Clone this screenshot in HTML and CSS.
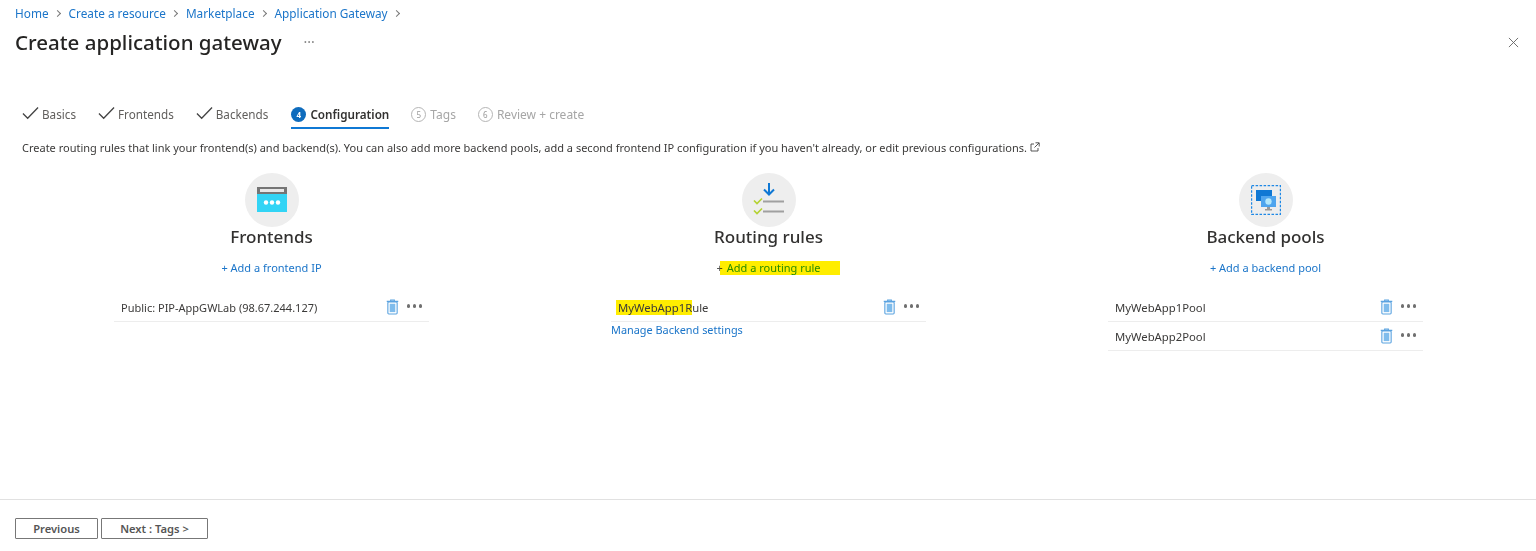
FILE: index.html
```html
<!DOCTYPE html>
<html lang="en">
<head>
<meta charset="utf-8">
<title>Create application gateway</title>
<link rel="stylesheet" href="styles.css">
</head>
<body>
<svg class="defs" width="0" height="0" aria-hidden="true">
  <symbol id="trash" viewBox="0 0 14 17">
    <path d="M5 2V1h4v1M.8 2.5h12.4" fill="none" stroke="#5ba3e0" stroke-width="1.2"/>
    <rect x="2" y="3" width="10" height="13" rx="1" fill="#fff" stroke="#5ba3e0" stroke-width="1.2"/>
    <rect x="4" y="5" width="6" height="9" fill="#7fbcec"/>
  </symbol>
  <symbol id="check" viewBox="0 0 18 14">
    <path d="M1 7.5 6 12.5 17 1.2" fill="none" stroke="#444" stroke-width="1.4"/>
  </symbol>
</svg>
<main class="page">
  <nav class="crumbs">
    <a>Home</a><span class="sep"></span>
    <a>Create a resource</a><span class="sep"></span>
    <a>Marketplace</a><span class="sep"></span>
    <a>Application Gateway</a><span class="sep"></span>
  </nav>
  <header class="head">
    <h1>Create application gateway</h1>
    <span class="head-more">···</span>
    <svg class="close" viewBox="0 0 12 12"><path d="M1 1l10 10M11 1 1 11" fill="none" stroke="#666" stroke-width="1"/></svg>
  </header>
  <div class="tabs">
    <div class="tab done"><svg class="tick"><use href="#check"/></svg>Basics</div>
    <div class="tab done t2"><svg class="tick"><use href="#check"/></svg>Frontends</div>
    <div class="tab done t3"><svg class="tick"><use href="#check"/></svg>Backends</div>
    <div class="tab active"><span class="num">4</span>Configuration</div>
    <div class="tab off"><span class="num">5</span>Tags</div>
    <div class="tab off"><span class="num">6</span>Review + create</div>
  </div>
  <p class="desc">Create routing rules that link your frontend(s) and backend(s). You can also add more backend pools, add a second frontend IP configuration if you haven't already, or edit previous configurations.<svg class="ext" viewBox="0 0 10 10"><path d="M4 2H1v7h7V6M5.500 .8h3.700v3.700M9 1 4.500 5.500" fill="none" stroke="#444" stroke-width=".9"/></svg></p>
  <section class="cols">
    <div class="col">
      <div class="badge"><svg class="fe-icon" viewBox="0 0 30 25" width="30" height="25">
        <rect width="30" height="25" fill="#32d4f5"/><rect width="30" height="7" fill="#757575"/><rect x="3" y="2" width="24" height="3" fill="#e8e8e8"/>
        <circle cx="9" cy="15.500" r="2.200" fill="#fff"/><circle cx="15" cy="15.500" r="2.200" fill="#fff"/><circle cx="21" cy="15.500" r="2.200" fill="#fff"/>
      </svg></div>
      <h2>Frontends</h2>
      <a class="add">+ Add a frontend IP</a>
      <div class="row"><span class="tight">Public: PIP-AppGWLab (98.67.244.127)</span><svg class="trash"><use href="#trash"/></svg><span class="dots"><i></i><i></i><i></i></span></div>
    </div>
    <div class="col">
      <div class="badge"><svg viewBox="0 0 32 34" width="32" height="34">
        <path d="M16 0v11.500M11 6.500l5 5 5-5" fill="none" stroke="#0f78d4" stroke-width="2"/>
        <path d="M1 17.500l3 3 5-5M1 27.500l3 3 5-5" fill="none" stroke="#b4d234" stroke-width="1.700"/>
        <path d="M10 18.500h21M10 28.500h21" stroke="#a0a0a0" stroke-width="2.200"/>
      </svg></div>
      <h2>Routing rules</h2>
      <a class="add shifted"><span class="add-plus">+</span><mark class="wide">Add a routing rule</mark></a>
      <div class="row"><span><mark class="name">MyWebApp1R</mark>ule</span><svg class="trash"><use href="#trash"/></svg><span class="dots"><i></i><i></i><i></i></span></div>
      <a class="manage">Manage Backend settings</a>
    </div>
    <div class="col">
      <div class="badge"><svg viewBox="0 0 30 30" width="30" height="30">
        <rect x=".6" y=".6" width="28.800" height="28.800" fill="none" stroke="#1e88e5" stroke-width="1.200" stroke-dasharray="2.500 1.500"/>
        <rect x="5" y="5" width="16" height="11" fill="#0f78d4"/>
        <rect x="10" y="11" width="15" height="11" fill="#4fa5ee"/>
        <circle cx="17.500" cy="16.500" r="3.200" fill="#b4e8fb"/>
        <path d="M16 22h3v2h2v1.500h-7V24h2z" fill="#999"/>
      </svg></div>
      <h2>Backend pools</h2>
      <a class="add">+ Add a backend pool</a>
      <div class="row"><span>MyWebApp1Pool</span><svg class="trash"><use href="#trash"/></svg><span class="dots"><i></i><i></i><i></i></span></div>
      <div class="row"><span>MyWebApp2Pool</span><svg class="trash"><use href="#trash"/></svg><span class="dots"><i></i><i></i><i></i></span></div>
    </div>
  </section>
  <footer class="foot">
    <button class="btn prev">Previous</button>
    <button class="btn next">Next : Tags &gt;</button>
  </footer>
</main>
</body>
</html>
```
FILE: styles.css
```css
* { box-sizing: border-box; }
html, body { margin: 0; height: 100%; background: #fff; }
body { font-family: "Noto Sans", "Open Sans", sans-serif; font-size: 11.5px; color: #3b3a39; overflow: hidden; }
.defs { position: absolute; }
.page { height: 551px; display: flex; flex-direction: column; position: relative; }

.crumbs { display: flex; align-items: center; height: 16px; margin: 5px 0 0 15px; font-size: 11.8px; color: #1b75c9; }
.sep { width: 5px; height: 5px; margin: 0 9px 0 6px; border-top: 1px solid #777; border-right: 1px solid #777; transform: rotate(45deg); }

.head { display: flex; align-items: center; height: 30px; margin: 6px 0 0 15px; }
h1 { margin: 0; font-size: 20.500px; font-weight: 500; color: #252423; line-height: 30px; }
.head-more { margin-left: 22px; color: #888; font-size: 14px; line-height: 1; }
.close { width: 11px; height: 11px; margin-left: auto; margin-right: 17px; }

.tabs { display: flex; height: 30px; margin: 42px 0 0 22px; }
.tab { display: flex; align-items: center; height: 30px; font-size: 11.700px; color: #605e5c; }
.tick { width: 17px; height: 14px; margin: -2px 3px 0 0; }
.t2, .t3 { margin-left: 22px; }
.active { margin-left: 23px; padding-top: 2px; color: #323130; font-weight: 600; border-bottom: 2px solid #0f78d4; }
.num { width: 15px; height: 15px; border-radius: 50%; margin-right: 4px; display: flex; align-items: center; justify-content: center; font-size: 8px; background: #0f6cbd; color: #fff; font-weight: 700; }
.off { margin-left: 22px; font-size: 12px; color: #a6a6a6; }
.off .num { background: #fff; border: 1px solid #b5b5b5; color: #999; font-weight: 400; }

.desc { margin: 10px 0 0 22px; height: 18px; line-height: 18px; font-size: 11px; color: #3b3a39; white-space: nowrap; }
.ext { width: 10px; height: 10px; margin-left: 3px; }

.cols { display: grid; grid-template-columns: repeat(3, 315px); column-gap: 182px; margin: 16px 0 0 114px; }
.col { display: flex; flex-direction: column; align-items: center; }
.badge { width: 54px; height: 54px; border-radius: 50%; background: #eeeeee; display: flex; align-items: center; justify-content: center; }
.fe-icon { margin-top: -1px; }
h2 { margin: -2px 0 0; font-size: 17px; line-height: 24px; font-weight: 500; color: #323130; }
.add { margin-top: 10px; height: 18px; line-height: 18px; color: #1b75c9; font-size: 11px; }
.shifted { margin-left: 19px; }
.add-plus { color: #555; }
mark { background: #ffed00; color: inherit; }
.wide { display: inline-block; height: 14px; line-height: 14px; padding: 0 19px 0 7px; margin-left: -3px; color: #2a8c00; mix-blend-mode: multiply; }
.name { padding-left: 2px; margin-left: -2px; }
.row { display: flex; align-items: center; width: 100%; height: 29px; padding: 0 7px; border-bottom: 1px solid #ededed; font-size: 11.300px; }
.add + .row { margin-top: 16px; }
.row > span:first-child { flex: 1; }
.row > .tight { font-size: 11px; }
.trash { width: 13px; height: 16px; margin-right: 8px; }
.dots { display: flex; gap: 2.500px; margin-top: -2px; }
.dots i { width: 3.500px; height: 3.500px; border-radius: 50%; background: #707070; }
.manage { align-self: flex-start; margin-top: -1px; line-height: 18px; color: #1b75c9; font-size: 10.900px; }

.foot { position: absolute; left: 0; right: 0; top: 499px; border-top: 1px solid #e1e1e1; padding: 18px 0 0 15px; display: flex; gap: 3px; }
.btn { height: 21px; background: #fff; border: 1px solid #777; border-radius: 1px; font: 600 11.200px "Noto Sans", sans-serif; color: #555; padding: 0; }
.prev { width: 83px; }
.next { width: 107px; }
```
